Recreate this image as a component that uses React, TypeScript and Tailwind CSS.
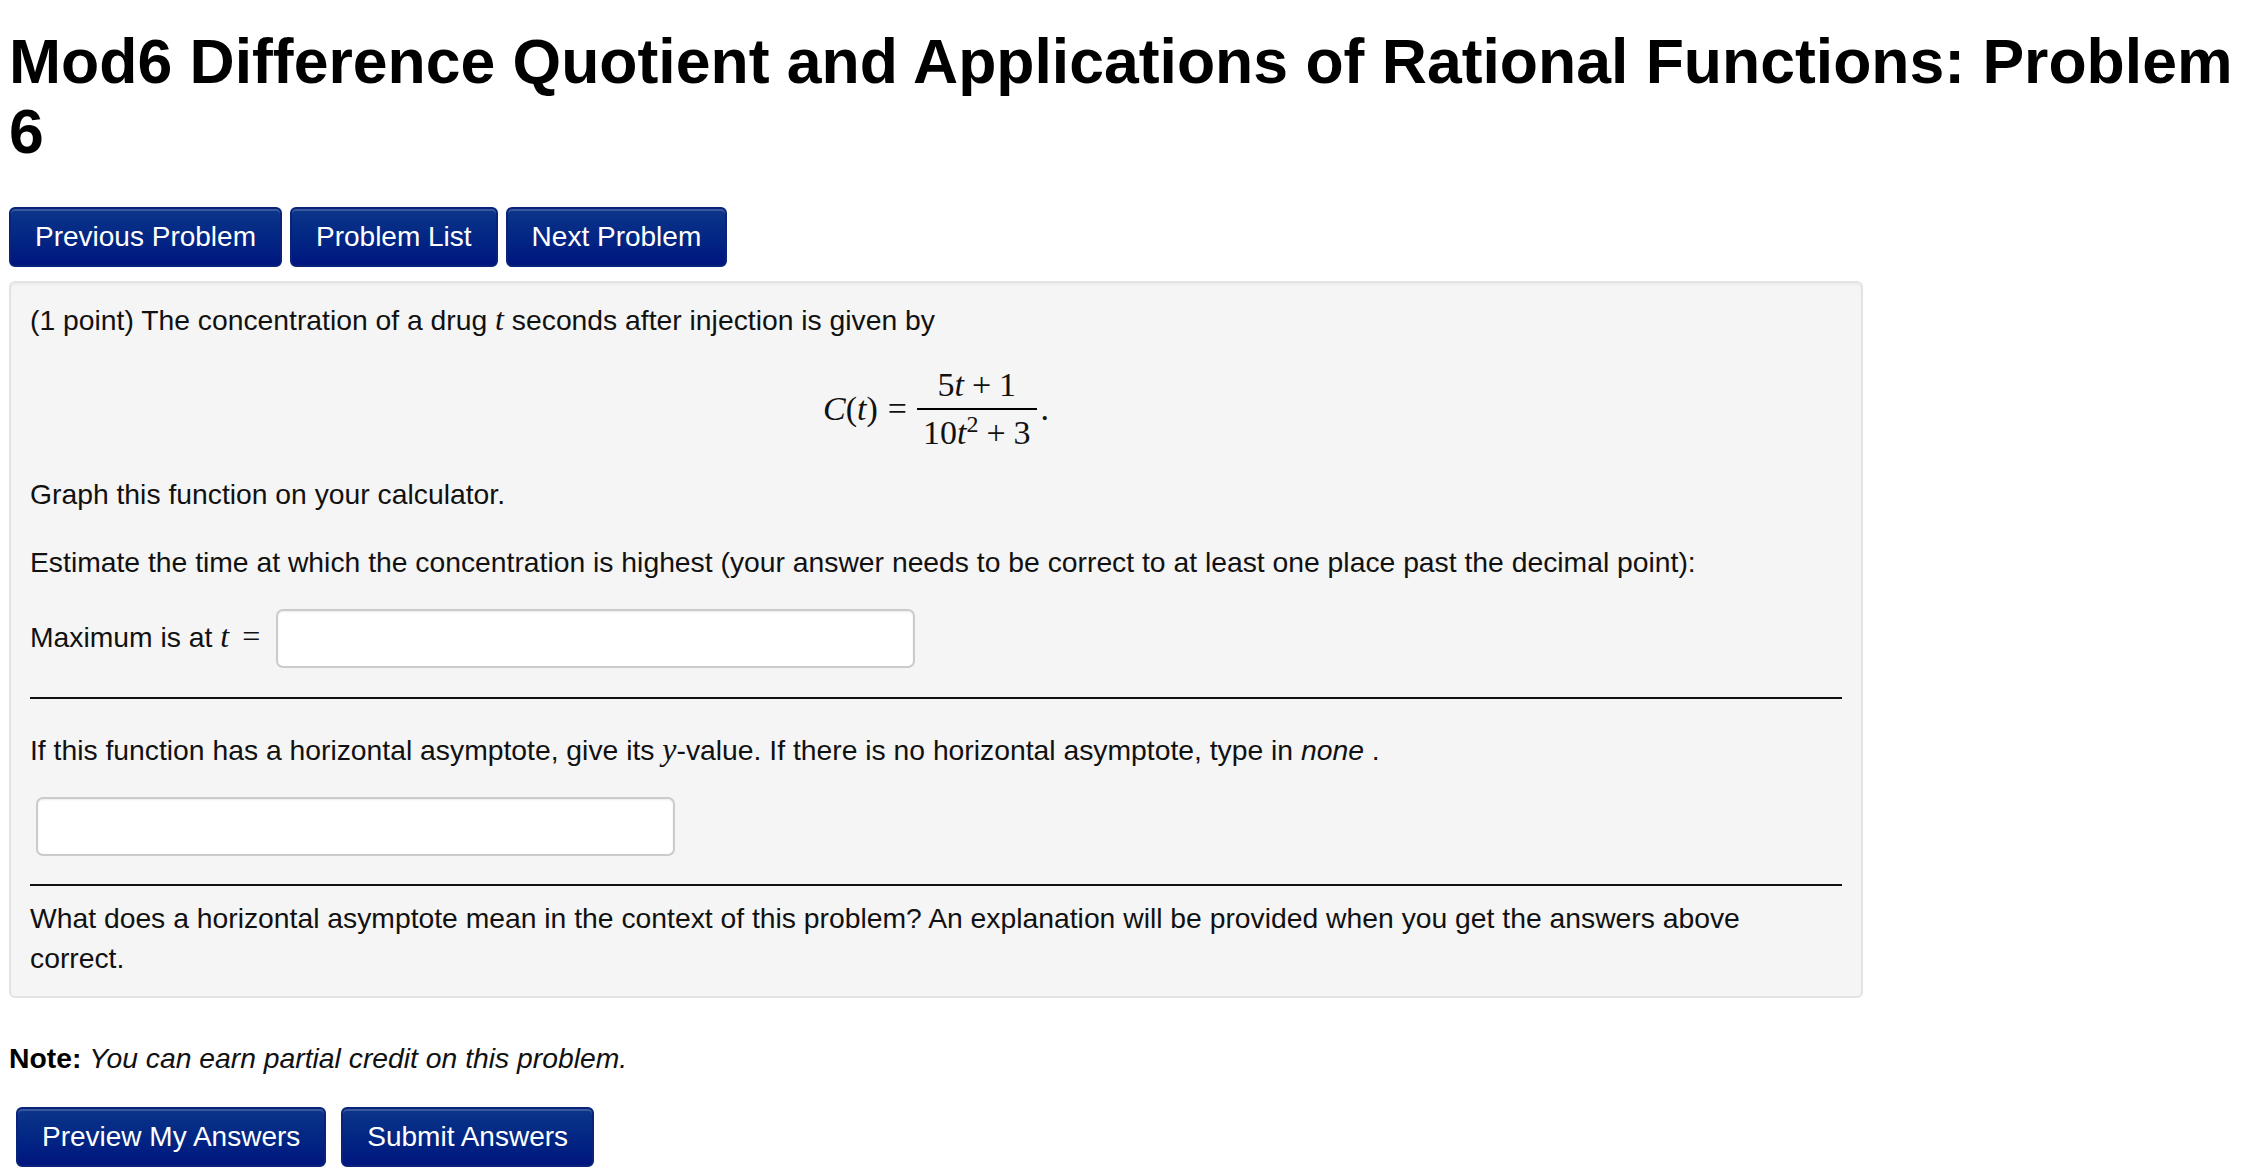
const navButton =
  "h-[60px] rounded-[6px] border-2 border-[#07237a] bg-linear-to-b from-[#0d3589] to-[#00157f] px-[24px] text-[28px] leading-none text-white shadow-[inset_0_2px_0_rgba(255,255,255,0.18)]";

const answerBox =
  "h-[59px] w-[639px] rounded-[7px] border-2 border-[#cbcbcb] bg-white shadow-[inset_0_1px_2px_rgba(0,0,0,0.08)]";

function MathVar({ children }: { children: React.ReactNode }) {
  return (
    <i className="font-['Liberation_Serif','Times_New_Roman',serif] text-[32px]">
      {children}
    </i>
  );
}

function Fraction() {
  return (
    <span className="inline-flex flex-col items-stretch">
      <span className="px-[6px] pb-[3px] text-center leading-[40px]">
        5<i>t</i>
        <span className="mx-[8px]">+</span>1
      </span>
      <span className="h-[2px] bg-black" />
      <span className="px-[6px] pt-[3px] text-center leading-[40px]">
        10<i>t</i>
        <sup className="text-[24px]">2</sup>
        <span className="mx-[8px]">+</span>3
      </span>
    </span>
  );
}

export default function App() {
  return (
    <div className="min-h-screen bg-white pl-[9px] font-['Liberation_Sans',Arial,Helvetica,sans-serif] text-[28.3px] leading-[40px] text-[#111]">
      <h1 className="pt-[26px] text-[62.5px] font-bold leading-[70px] text-black">
        Mod6 Difference Quotient and Applications of Rational Functions: Problem 6
      </h1>

      <div className="mt-[41px] flex gap-[8px]">
        <button type="button" className={navButton}>
          Previous Problem
        </button>
        <button type="button" className={navButton}>
          Problem List
        </button>
        <button type="button" className={navButton}>
          Next Problem
        </button>
      </div>

      <div className="mt-[14px] w-[1854px] rounded-[6px] border-2 border-[#e3e3e3] bg-[#f5f5f5] px-[19px] pt-[16px] pb-[18px] shadow-[inset_0_2px_2px_rgba(0,0,0,0.04)]">
        <p>
          (1 point) The concentration of a drug <MathVar>t</MathVar> seconds after
          injection is given by
        </p>

        <div className="mt-[3px] flex h-[131px] items-center justify-center font-['Liberation_Serif','Times_New_Roman',serif] text-[34px]">
          <span className="leading-[40px]">
            <i>C</i>(<i>t</i>)
          </span>
          <span className="mx-[10px] leading-[40px]">=</span>
          <Fraction />
          <span className="ml-[4px] leading-[40px]">.</span>
        </div>

        <p className="mb-[28px]">Graph this function on your calculator.</p>

        <p className="mb-[27px]">
          Estimate the time at which the concentration is highest (your answer
          needs to be correct to at least one place past the decimal point):
        </p>

        <div className="flex items-center">
          <span className="pb-[4px]">
            Maximum is at <MathVar>t</MathVar>
            <span className="ml-[13px] font-['Liberation_Serif','Times_New_Roman',serif] text-[32px]">
              =
            </span>
          </span>
          <input type="text" className={`${answerBox} ml-[16px]`} />
        </div>

        <div className="mt-[29px] h-[2px] bg-[#111]" />

        <p className="mt-[30px]">
          If this function has a horizontal asymptote, give its{" "}
          <MathVar>y</MathVar>-value. If there is no horizontal asymptote, type in{" "}
          <i>none</i> .
        </p>

        <input type="text" className={`${answerBox} mt-[27px] ml-[6px] block`} />

        <div className="mt-[28px] h-[2px] bg-[#111]" />

        <p className="mt-[12px] pr-[40px]">
          What does a horizontal asymptote mean in the context of this problem? An
          explanation will be provided when you get the answers above correct.
        </p>
      </div>

      <p className="mt-[40px]">
        <b className="text-black">Note:</b> <i>You can earn partial credit on this problem.</i>
      </p>

      <div className="mt-[29px] ml-[7px] flex gap-[15px]">
        <button type="button" className={navButton}>
          Preview My Answers
        </button>
        <button type="button" className={navButton}>
          Submit Answers
        </button>
      </div>
    </div>
  );
}
